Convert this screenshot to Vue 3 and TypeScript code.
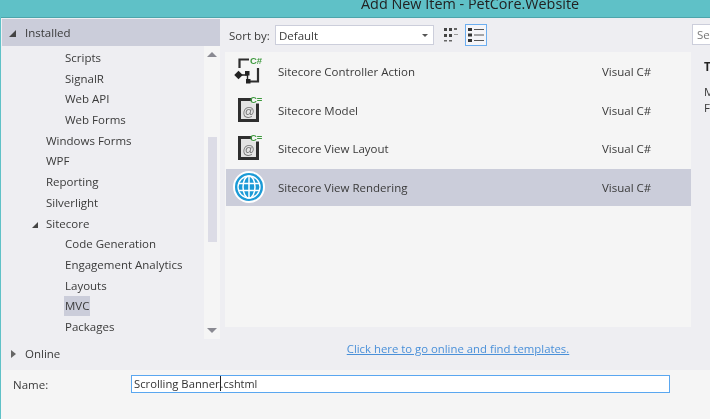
<script setup lang="ts">
interface TreeItem { label: string; level: number; arrow?: boolean; selected?: boolean }
const tree: TreeItem[] = [
  { label: 'Scripts', level: 2 },
  { label: 'SignalR', level: 2 },
  { label: 'Web API', level: 2 },
  { label: 'Web Forms', level: 2 },
  { label: 'Windows Forms', level: 1 },
  { label: 'WPF', level: 1 },
  { label: 'Reporting', level: 1 },
  { label: 'Silverlight', level: 1 },
  { label: 'Sitecore', level: 1, arrow: true },
  { label: 'Code Generation', level: 2 },
  { label: 'Engagement Analytics', level: 2 },
  { label: 'Layouts', level: 2 },
  { label: 'MVC', level: 2, selected: true },
  { label: 'Packages', level: 2 },
]
const rows = [
  { name: 'Sitecore Controller Action', icon: 'action' },
  { name: 'Sitecore Model', icon: 'page', mark: 'C=' },
  { name: 'Sitecore View Layout', icon: 'page', mark: 'C=' },
  { name: 'Sitecore View Rendering', icon: 'globe', selected: true },
]
</script>

<template>
  <div class="window">
    <header class="title">Add New Item - PetCore.Website</header>
    <div class="main">
      <aside class="side">
        <div class="installed"><span class="tri-open"></span>Installed</div>
        <div class="tree-wrap">
          <ul class="tree">
            <li v-for="t in tree" :key="t.label" class="node" :class="'lv' + t.level">
              <span v-if="t.arrow" class="tri-open small"></span>
              <span class="lbl" :class="{ sel: t.selected }">{{ t.label }}</span>
            </li>
          </ul>
          <div class="scrollbar">
            <span class="up"></span>
            <span class="thumb"></span>
            <span class="down"></span>
          </div>
        </div>
        <div class="online"><span class="tri-closed"></span>Online</div>
      </aside>
      <section class="center">
        <div class="toolbar">
          <span class="sort-label">Sort by:</span>
          <div class="select"><span>Default</span><i class="caret"></i></div>
          <button class="view">
            <svg width="15" height="15" viewBox="0 0 15 15" fill="#444">
              <rect x="0" y="0" width="3" height="3" /><rect x="5" y="0" width="3" height="3" /><rect x="10" y="0" width="3" height="2" fill="#666" />
              <rect x="0" y="6" width="3" height="3" /><rect x="5" y="6" width="3" height="3" /><rect x="10" y="6" width="4" height="1" fill="#999" />
              <rect x="0" y="12" width="3" height="1.5" fill="#666" /><rect x="5" y="12" width="3" height="1.5" fill="#666" />
            </svg>
          </button>
          <button class="view on">
            <svg width="16" height="16" viewBox="0 0 16 16">
              <rect x="0" y="1" width="4" height="3" fill="#333" /><rect x="6" y="2" width="10" height="1" fill="#555" />
              <rect x="0" y="6.5" width="4" height="3" fill="#333" /><rect x="6" y="7.5" width="10" height="1" fill="#555" />
              <rect x="0" y="12" width="4" height="3" fill="#333" /><rect x="6" y="13" width="10" height="1" fill="#555" />
            </svg>
          </button>
        </div>
        <div class="list">
          <div v-for="r in rows" :key="r.name" class="row" :class="{ sel: r.selected }">
            <svg v-if="r.icon === 'action'" class="icon" width="32" height="30" viewBox="0 0 32 30">
              <path d="M17 3.5H7.5V12M26 12V25.5H18" fill="none" stroke="#2e2e2e" stroke-width="2.2" />
              <text x="18" y="7.5" class="cs">C#</text>
              <rect x="3.5" y="16" width="6" height="6" fill="#222" transform="rotate(45 6.5 19)" />
              <rect x="13" y="15" width="4.5" height="4.5" fill="#222" />
              <rect x="14" y="23" width="4.5" height="4.5" fill="#222" />
              <path d="M7 19H15.5V25" stroke="#222" stroke-width="1.4" fill="none" />
            </svg>
            <svg v-else-if="r.icon === 'page'" class="icon" width="32" height="30" viewBox="0 0 32 30">
              <rect x="7.5" y="4.5" width="18" height="21" fill="#e4e4e4" stroke="#2e2e2e" stroke-width="3" />
              <rect x="20" y="0" width="12" height="8.5" fill="#f5f5f5" />
              <text x="10.5" y="21" class="at">@</text>
              <text x="18" y="7.5" class="cs">{{ r.mark }}</text>
            </svg>
            <svg v-else class="icon" width="32" height="32" viewBox="0 0 32 32">
              <circle cx="16" cy="16" r="16" fill="#fff" />
              <circle cx="16" cy="16" r="14" fill="#1b9ad6" />
              <g fill="none" stroke="#fff" stroke-width="1.5">
                <circle cx="16" cy="16" r="11" stroke-width="1.3" />
                <ellipse cx="16" cy="16" rx="6" ry="11" />
                <path d="M16 5V27M5.5 12.5H26.5M5.5 19.5H26.5" />
              </g>
            </svg>
            <span class="name">{{ r.name }}</span>
            <span class="lang">Visual C#</span>
          </div>
        </div>
        <a class="link">Click here to go online and find templates.</a>
      </section>
      <aside class="detail">
        <div class="search">Se</div>
        <div class="type">T</div>
        <div class="desc">M<br />F</div>
      </aside>
    </div>
    <footer class="footer">
      <label class="name-label">Name:</label>
      <div class="input">Scrolling Banner<i class="cursor"></i><span class="ext">.cshtml</span></div>
    </footer>
  </div>
</template>

<style>
html, body { margin: 0; overflow: hidden; }
.cs { font: 700 9.5px "Liberation Sans", sans-serif; fill: #3e9a3e; }
.at { font: 12px "Liberation Sans", sans-serif; fill: #777; }
</style>

<style scoped>
.window {
  width: 710px; height: 419px; box-sizing: border-box; overflow: hidden;
  display: flex; flex-direction: column;
  border-left: 1px solid #5fc1c7;
  font: 11.5px/16px "Open Sans", "Noto Sans", sans-serif; color: #3a3a3a;
  background: #eeeef2;
  filter: blur(0.3px);
}
.title {
  height: 18px; box-sizing: border-box; background: #5fc1c7; border-bottom: 1px solid #4da5ab;
  flex: none; font-size: 14.4px; line-height: 0; padding: 4px 0 0 360px; color: #222; white-space: nowrap;
}
.main { flex: 1; display: flex; min-height: 0; }
.side { width: 219px; flex: none; display: flex; flex-direction: column; padding-top: 1px; }
.installed {
  height: 27px; background: #cbcdda; display: flex; align-items: center; margin-left: 1px; padding-top: 1px; box-sizing: border-box;
}
.tri-open {
  width: 0; height: 0; border-style: solid; border-width: 0 0 7px 7px;
  border-color: transparent transparent #444 transparent; margin: 0 9px 0 7px;
}
.tri-open.small { position: absolute; margin: 0; left: 31px; top: 8px; border-width: 0 0 6px 6px; }
.tree-wrap { height: 293px; display: flex; }
.tree { flex: 1; list-style: none; margin: 0; padding: 2px 0 0; overflow: hidden; min-width: 0; }
.node { height: 20.7px; line-height: 20px; position: relative; white-space: nowrap; }
.lv1 { padding-left: 45px; }
.lv2 { padding-left: 64px; }
.lbl { display: inline-block; }
.lbl.sel { background: #cbcdda; margin-left: -1px; padding: 0 1px; }
.scrollbar { width: 16px; background: #f5f5f5; position: relative; flex: none; }
.up, .down { position: absolute; left: 3px; width: 0; height: 0; border-left: 5px solid transparent; border-right: 5px solid transparent; }
.up { top: 6px; border-bottom: 5px solid #8a8a92; }
.down { bottom: 6px; border-top: 5px solid #8a8a92; }
.thumb { position: absolute; left: 4px; top: 91px; width: 9px; height: 105px; background: #dcdce6; }
.online { flex: 1; display: flex; align-items: center; padding-bottom: 1px; }
.tri-closed {
  width: 0; height: 0; border-style: solid; border-width: 4px 0 4px 5px;
  border-color: transparent transparent transparent #666; margin: 0 9px 0 10px;
}
.center { width: 466px; flex: none; margin-left: 5px; display: flex; flex-direction: column; }
.toolbar { height: 34px; display: flex; align-items: center; padding-left: 4px; flex: none; }
.sort-label { width: 46px; flex: none; padding-top: 1px; }
.select {
  width: 159px; height: 20px; box-sizing: border-box; background: #fff; border: 1px solid #cccedb;
  display: flex; align-items: center; justify-content: space-between; padding: 1px 5px 0 3px; margin-right: 10px; flex: none;
}
.caret { width: 0; height: 0; border-left: 3px solid transparent; border-right: 3px solid transparent; border-top: 3px solid #555; }
.view { width: 15px; height: 15px; padding: 0; border: 0; background: transparent; display: flex; align-items: center; justify-content: center; flex: none; }
.view.on { width: 22px; height: 22px; border: 1px solid #6caef0; background: #f5f5f8; margin-left: 6px; }
.list { height: 275px; background: #f5f5f5; flex: none; box-sizing: border-box; padding-top: 0.4px; }
.row { height: 38.5px; display: flex; align-items: center; position: relative; box-sizing: border-box; padding-top: 1px; }
.row.sel { height: 39px; background: #cbcdda; border-top: 1px solid #f5f5f5; border-bottom: 1px solid #f5f5f5; margin-left: 1px; }
.icon { position: absolute; left: 7px; top: 4px; }
.row.sel .icon { left: 7px; top: 2px; }
.name { margin-left: 53px; flex: 1; }
.row.sel .name { margin-left: 52px; }
.lang { width: 89px; flex: none; }
.link { color: #4a90d9; text-decoration: underline; align-self: center; margin-top: 14px; font-size: 11.35px; }
.detail { flex: 1; padding-left: 1px; min-width: 0; }
.search {
  margin-top: 6px; height: 21px; box-sizing: border-box; border: 1px solid #cccedb; background: #fff; color: #777;
  padding-left: 4px; line-height: 19px; margin-right: -10px;
}
.type { font-weight: 700; color: #222; margin: 14px 0 0 12px; }
.desc { margin: 9px 0 0 12px; }
.footer { height: 49px; flex: none; background: #f5f5f5; display: flex; padding-top: 5px; box-sizing: border-box; }
.name-label { width: 130px; padding: 1px 0 0 12px; box-sizing: border-box; line-height: 18px; }
.input {
  width: 539px; height: 18px; box-sizing: border-box; background: #fff; border: 1px solid #5aa7f0;
  padding-left: 2px; line-height: 16px; color: #333; white-space: nowrap; font-size: 11.25px;
}
.cursor { display: inline-block; width: 1px; height: 15px; background: #222; vertical-align: -3px; }
.ext { font-size: 10.9px; }
</style>
